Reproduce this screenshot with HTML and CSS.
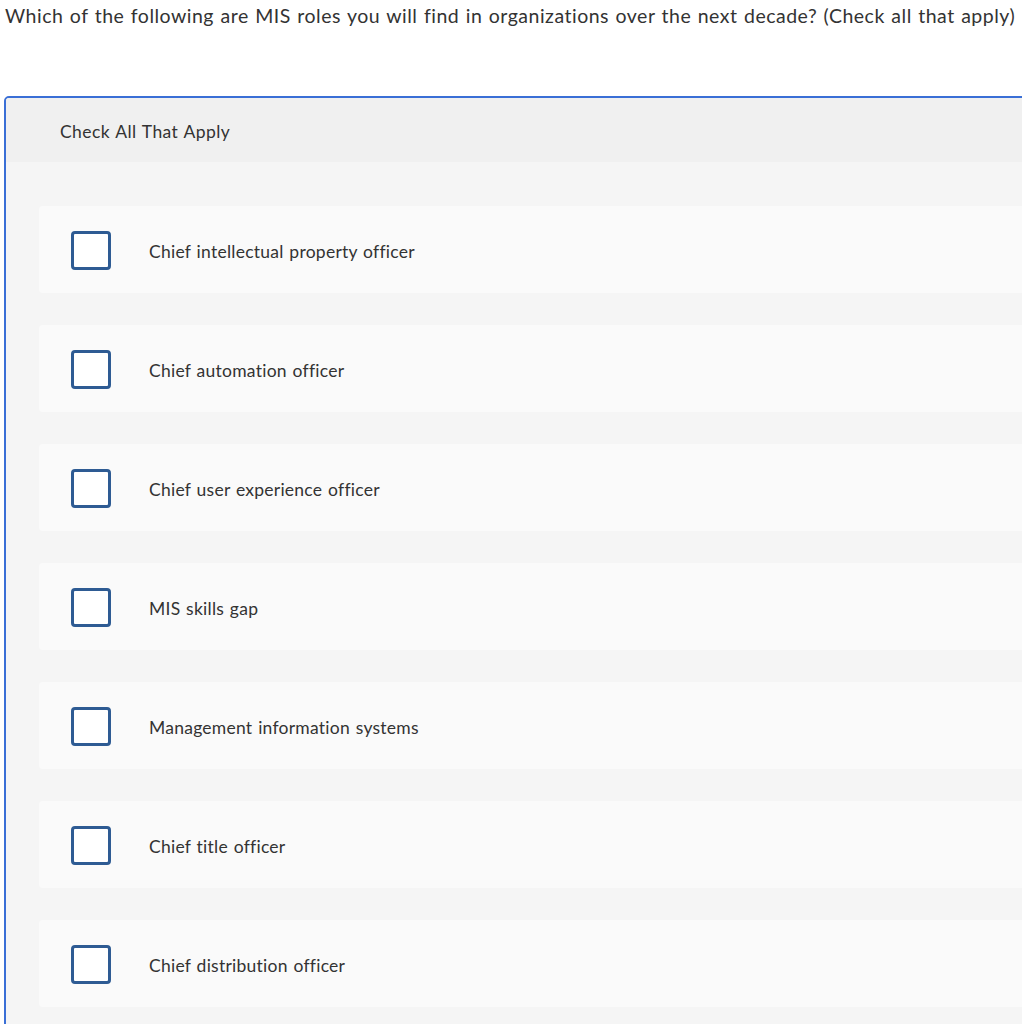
FILE: index.html
```html
<!DOCTYPE html>
<html lang="en">
	<head>
		<meta charset="UTF-8" />
		<meta name="viewport" content="width=device-width, initial-scale=1.0" />
		<title>Check All That Apply</title>
		<link rel="stylesheet" href="styles.css">
	</head>
	<body>
		<p class="question">
			Which of the following are MIS roles you will find in organizations over the next decade? (Check all that apply)
		</p>

		<div class="card">
			<div class="card-header">Check All That Apply</div>

			<div class="card-body">
				<label class="option">
					<input type="checkbox" />
					<span class="box"></span>
					<span class="option-text">Chief intellectual property officer</span>
				</label>
				<label class="option">
					<input type="checkbox" />
					<span class="box"></span>
					<span class="option-text">Chief automation officer</span>
				</label>
				<label class="option">
					<input type="checkbox" />
					<span class="box"></span>
					<span class="option-text">Chief user experience officer</span>
				</label>
				<label class="option">
					<input type="checkbox" />
					<span class="box"></span>
					<span class="option-text">MIS skills gap</span>
				</label>
				<label class="option">
					<input type="checkbox" />
					<span class="box"></span>
					<span class="option-text">Management information systems</span>
				</label>
				<label class="option">
					<input type="checkbox" />
					<span class="box"></span>
					<span class="option-text">Chief title officer</span>
				</label>
				<label class="option">
					<input type="checkbox" />
					<span class="box"></span>
					<span class="option-text">Chief distribution officer</span>
				</label>
			</div>
		</div>
	</body>
</html>
```

FILE: styles.css
```css
html,
body {
	overflow: hidden;
}

body {
	font-family: 'Lato', 'Liberation Sans', sans-serif;
	font-variant-ligatures: none;
	margin: 0;
	padding: 0 0 0 4px;
	background-color: #fff;
	color: #333;
}

.question {
	margin: 2px 0 0 1px;
	font-size: 19.5px;
	line-height: 28px;
	letter-spacing: 0.5px;
	word-spacing: 1px;
	white-space: nowrap;
}

.card {
	width: 1120px;
	margin-top: 66px;
	border: 2px solid #3a6fd6;
	border-radius: 5px;
	background-color: #f5f5f5;
	overflow: hidden;
}

.card-header {
	height: 64px;
	padding-left: 54px;
	padding-top: 2px;
	box-sizing: border-box;
	display: flex;
	align-items: center;
	background-color: #f0f0f0;
	font-size: 17.5px;
	letter-spacing: 0.4px;
	word-spacing: 1px;
}

.card-body {
	display: flex;
	flex-direction: column;
	gap: 32px;
	padding: 44px 0 40px 33px;
}

.option {
	height: 87px;
	display: flex;
	align-items: center;
	gap: 38px;
	padding-left: 32px;
	background-color: #fafafa;
	border-radius: 4px;
	cursor: pointer;
	font-size: 17.5px;
	letter-spacing: 0.25px;
	word-spacing: 1px;
}

.option input {
	display: none;
}

.option-text {
	padding-top: 3px;
}

.box {
	width: 34px;
	height: 33px;
	margin-top: 2px;
	border: 3px solid #2e5b93;
	border-radius: 4px;
	background-color: #fff;
	flex-shrink: 0;
}

.option input:checked + .box {
	background-color: #2e5b93;
}
```
